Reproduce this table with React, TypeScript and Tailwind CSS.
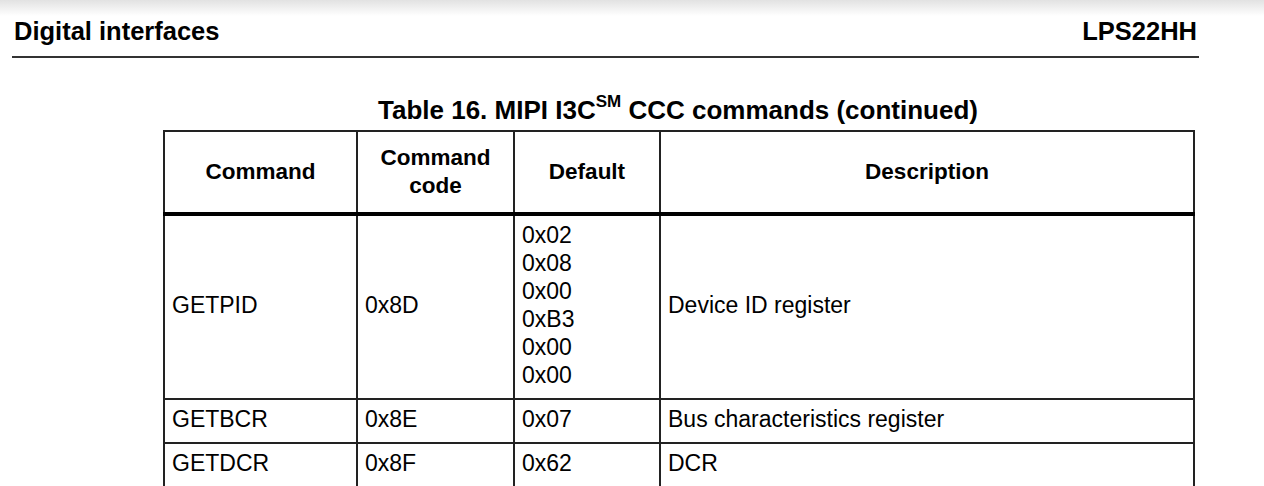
const rows = [
  {
    cmd: 'GETPID',
    code: '0x8D',
    def: ['0x02', '0x08', '0x00', '0xB3', '0x00', '0x00'],
    desc: 'Device ID register',
  },
  { cmd: 'GETBCR', code: '0x8E', def: ['0x07'], desc: 'Bus characteristics register' },
  { cmd: 'GETDCR', code: '0x8F', def: ['0x62'], desc: 'DCR' },
];

export default function App() {
  return (
    <div className="w-[1264px] h-[486px] overflow-hidden bg-white text-black font-['Liberation_Sans',Arial,sans-serif]">
      {/* viewer shadow */}
      <div className="h-[16px] bg-linear-to-b from-[#e2e2e2] to-white" />

      {/* page header */}
      <div className="ml-[12px] w-[1187px] flex justify-between px-[2px] pb-[10px] border-b-2 border-[#333] text-[25.5px] leading-[30px] font-bold">
        <span>Digital interfaces</span>
        <span>LPS22HH</span>
      </div>

      <div className="ml-[163px] w-[1030px]">
        <h2 className="mt-[37px] text-center text-[26px] leading-[30px] font-bold">
          Table 16. MIPI I3C<sup className="text-[17px] -top-[12px]">SM</sup> CCC commands (continued)
        </h2>

        <table className="mt-[5px] w-[1030px] table-fixed border-collapse text-[23px] leading-[28px]">
          <colgroup>
            <col className="w-[193px]" />
            <col className="w-[157px]" />
            <col className="w-[146px]" />
            <col className="w-[534px]" />
          </colgroup>
          <thead>
            <tr className="font-bold text-center">
              <th className="border-2 border-[#222] border-b-4 border-b-black py-[12px] align-middle text-[22.5px]">Command</th>
              <th className="border-2 border-[#222] border-b-4 border-b-black py-[12px] align-middle text-[22.5px]">
                Command
                <br />
                code
              </th>
              <th className="border-2 border-[#222] border-b-4 border-b-black py-[12px] align-middle text-[22.5px]">Default</th>
              <th className="border-2 border-[#222] border-b-4 border-b-black py-[12px] align-middle text-[22.5px]">Description</th>
            </tr>
          </thead>
          <tbody>
            {rows.map((r, i) => {
              const cell = `border-2 border-[#222] px-[7px] pt-[5px] align-middle ${i === rows.length - 1 ? 'pb-[40px]' : 'pb-[9px]'}`;
              return (
                <tr key={r.cmd}>
                  <td className={cell}>{r.cmd}</td>
                  <td className={cell}>{r.code}</td>
                  <td className={cell}>
                    {r.def.map((d, j) => (
                      <div key={j}>{d}</div>
                    ))}
                  </td>
                  <td className={cell}>{r.desc}</td>
                </tr>
              );
            })}
          </tbody>
        </table>
      </div>
    </div>
  );
}
